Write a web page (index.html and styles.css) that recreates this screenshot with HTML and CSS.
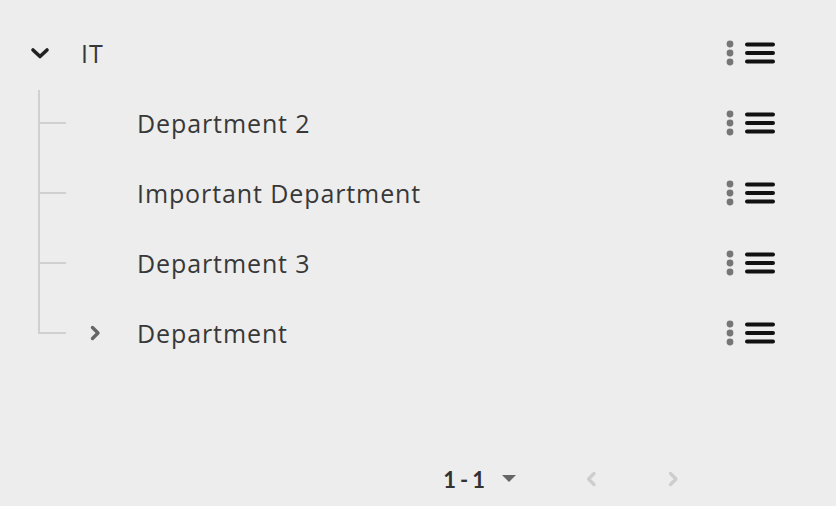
FILE: index.html
```html
<!DOCTYPE html>
<html>
<head>
<meta charset="utf-8">
<link rel="stylesheet" href="styles.css">
</head>
<body>
<div class="panel">
  <div class="tree">
    <div class="row root">
      <span class="toggle">
        <svg width="24" height="24" viewBox="0 0 24 24"><path d="M5 9 L12 15.5 L19 9" fill="none" stroke="#222" stroke-width="3.6" stroke-linecap="round" stroke-linejoin="round"/></svg>
      </span>
      <span class="label">IT</span>
      <span class="actions">
        <svg width="52" height="28" viewBox="0 0 52 28"><g fill="#767676"><circle cx="6" cy="5" r="3.4"/><circle cx="6" cy="14" r="3.4"/><circle cx="6" cy="23" r="3.4"/></g><g stroke="#111" stroke-width="4" stroke-linecap="round"><path d="M23 5.5H49M23 14H49M23 22.5H49"/></g></svg>
      </span>
    </div>
    <div class="children">
      <div class="row child">
        <span class="connector"></span>
        <span class="toggle"></span>
        <span class="label">Department 2</span>
        <span class="actions">
          <svg width="52" height="28" viewBox="0 0 52 28"><g fill="#767676"><circle cx="6" cy="5" r="3.4"/><circle cx="6" cy="14" r="3.4"/><circle cx="6" cy="23" r="3.4"/></g><g stroke="#111" stroke-width="4" stroke-linecap="round"><path d="M23 5.5H49M23 14H49M23 22.5H49"/></g></svg>
        </span>
      </div>
      <div class="row child">
        <span class="connector"></span>
        <span class="toggle"></span>
        <span class="label">Important Department</span>
        <span class="actions">
          <svg width="52" height="28" viewBox="0 0 52 28"><g fill="#767676"><circle cx="6" cy="5" r="3.4"/><circle cx="6" cy="14" r="3.4"/><circle cx="6" cy="23" r="3.4"/></g><g stroke="#111" stroke-width="4" stroke-linecap="round"><path d="M23 5.5H49M23 14H49M23 22.5H49"/></g></svg>
        </span>
      </div>
      <div class="row child">
        <span class="connector"></span>
        <span class="toggle"></span>
        <span class="label">Department 3</span>
        <span class="actions">
          <svg width="52" height="28" viewBox="0 0 52 28"><g fill="#767676"><circle cx="6" cy="5" r="3.4"/><circle cx="6" cy="14" r="3.4"/><circle cx="6" cy="23" r="3.4"/></g><g stroke="#111" stroke-width="4" stroke-linecap="round"><path d="M23 5.5H49M23 14H49M23 22.5H49"/></g></svg>
        </span>
      </div>
      <div class="row child last">
        <span class="connector"></span>
        <span class="toggle">
          <svg width="24" height="24" viewBox="0 0 24 24"><path d="M9.5 6.5 L15 12 L9.5 17.5" fill="none" stroke="#666" stroke-width="3.4" stroke-linecap="round" stroke-linejoin="round"/></svg>
        </span>
        <span class="label">Department</span>
        <span class="actions">
          <svg width="52" height="28" viewBox="0 0 52 28"><g fill="#767676"><circle cx="6" cy="5" r="3.4"/><circle cx="6" cy="14" r="3.4"/><circle cx="6" cy="23" r="3.4"/></g><g stroke="#111" stroke-width="4" stroke-linecap="round"><path d="M23 5.5H49M23 14H49M23 22.5H49"/></g></svg>
        </span>
      </div>
    </div>
  </div>
  <div class="pager">
    <span class="range">1-1</span>
    <span class="caret"><svg width="14" height="8" viewBox="0 0 14 8"><path d="M0 0H14L7 7Z" fill="#666"/></svg></span>
    <span class="nav"><svg width="24" height="24" viewBox="0 0 24 24"><path d="M15 6.5 L9.5 12 L15 17.5" fill="none" stroke="#cdcdcd" stroke-width="3.2" stroke-linecap="round" stroke-linejoin="round"/></svg></span>
    <span class="nav"><svg width="24" height="24" viewBox="0 0 24 24"><path d="M9.5 6.5 L15 12 L9.5 17.5" fill="none" stroke="#cdcdcd" stroke-width="3.2" stroke-linecap="round" stroke-linejoin="round"/></svg></span>
  </div>
</div>
</body>
</html>
```
FILE: styles.css
```css
html, body {
  margin: 0;
  padding: 0;
  background: #ededed;
}
body {
  width: 836px;
  height: 506px;
  overflow: hidden;
  font-family: "Open Sans", Lato, sans-serif;
  color: #333;
}
.panel {
  display: flex;
  flex-direction: column;
}
.tree {
  padding: 18px 60px 0 28px;
}
.row {
  display: flex;
  align-items: center;
  height: 70px;
}
.toggle {
  width: 24px;
  height: 24px;
  display: flex;
  align-items: center;
  justify-content: center;
  flex: none;
}
.label {
  font-size: 25px;
  letter-spacing: 0.9px;
  margin-left: 29px;
  flex: 1;
  color: #383838;
}
.child .label {
  margin-left: 30px;
}
.actions {
  display: flex;
  align-items: center;
  flex: none;
}
.child {
  padding-left: 10px;
}
.connector {
  align-self: stretch;
  width: 28px;
  flex: none;
  margin-right: 17px;
  background:
    linear-gradient(#d0d0d0, #d0d0d0) left 0 top 0 / 2px 100% no-repeat,
    linear-gradient(#d0d0d0, #d0d0d0) left 0 top 34px / 100% 2px no-repeat;
}
.children .row:first-child .connector {
  background:
    linear-gradient(#d0d0d0, #d0d0d0) left 0 top 2px / 2px 100% no-repeat,
    linear-gradient(#d0d0d0, #d0d0d0) left 0 top 34px / 100% 2px no-repeat;
}
.child.last .connector {
  background:
    linear-gradient(#d0d0d0, #d0d0d0) left 0 top 0 / 2px 36px no-repeat,
    linear-gradient(#d0d0d0, #d0d0d0) left 0 top 34px / 100% 2px no-repeat;
}
.pager {
  display: flex;
  align-items: center;
  justify-content: flex-end;
  height: 56px;
  margin-top: 83px;
  padding-right: 122px;
}
.range {
  font-family: Lato, sans-serif;
  font-size: 22px;
  font-weight: 700;
  color: #333;
  letter-spacing: 4px;
  margin-right: -4px;
}
.caret {
  display: flex;
  margin-left: 17px;
  margin-right: 34px;
}
.nav {
  width: 82px;
  display: flex;
  justify-content: center;
}
```
